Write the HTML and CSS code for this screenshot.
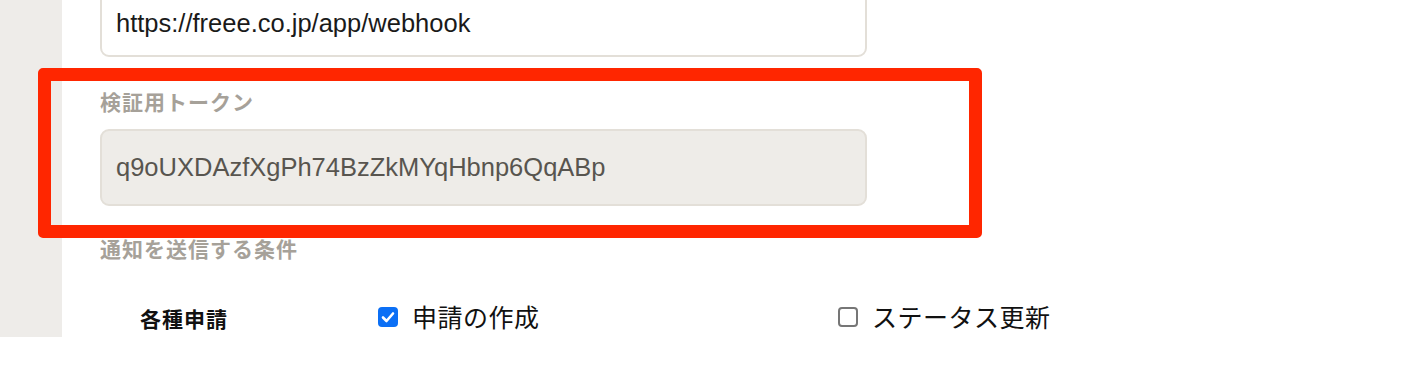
FILE: index.html
```html
<!DOCTYPE html>
<html lang="ja">
<head>
<meta charset="utf-8">
<link rel="stylesheet" href="styles.css">
</head>
<body>
<div class="page">
  <aside class="sidebar"></aside>
  <main class="main">
    <div class="field">https://freee.co.jp/app/webhook</div>
    <div class="label label-token">検証用トークン</div>
    <div class="field field-readonly">q9oUXDAzfXgPh74BzZkMYqHbnp6QqABp</div>
    <div class="label label-cond">通知を送信する条件</div>
    <div class="row">
      <div class="row-title">各種申請</div>
      <label class="check check-first">
        <span class="box box-checked">
          <svg viewBox="0 0 20 20" width="20" height="20"><path d="M5 10.5 L8.5 14 L15 6.5" fill="none" stroke="#fff" stroke-width="2.6" stroke-linecap="round" stroke-linejoin="round"/></svg>
        </span>
        <span class="check-text">申請の作成</span>
      </label>
      <label class="check">
        <span class="box"></span>
        <span class="check-text">ステータス更新</span>
      </label>
    </div>
  </main>
  <div class="highlight"></div>
</div>
</body>
</html>
```
FILE: styles.css
```css
html, body {
  margin: 0;
  padding: 0;
  background: #fff;
}
body {
  font-family: "Liberation Sans", "Noto Sans CJK JP", sans-serif;
}
.page {
  position: relative;
  display: flex;
  height: 337px;
  overflow: hidden;
}
.sidebar {
  width: 62px;
  flex: none;
  background: #eeece9;
}
.main {
  flex: 1;
  padding-left: 38px;
  margin-top: -20px;
}
.field {
  box-sizing: border-box;
  width: 767px;
  height: 77px;
  border: 2px solid #e3dfd8;
  border-radius: 9px;
  padding-left: 14px;
  display: flex;
  align-items: center;
  font-size: 25.5px;
  color: #1a1a1a;
  padding-top: 10px;
}
.field-readonly {
  background: #eeece8;
  color: #58554f;
  margin-top: 13px;
  padding-top: 0;
}
.label {
  font-family: "Noto Sans CJK JP", sans-serif;
  font-weight: 700;
  font-size: 21px;
  letter-spacing: 1px;
  line-height: 30px;
  color: #a6a199;
}
.label-token {
  margin-top: 29px;
}
.label-cond {
  margin-top: 27px;
}
.row {
  display: flex;
  align-items: center;
  margin-top: 39px;
  height: 30px;
  padding-left: 40px;
  font-family: "Noto Sans CJK JP", sans-serif;
}
.row-title {
  width: 238px;
  font-weight: 700;
  font-size: 21px;
  letter-spacing: 1px;
  color: #111;
  padding-top: 2px;
}
.check {
  display: flex;
  align-items: center;
  gap: 14px;
  font-size: 25px;
  letter-spacing: 0.5px;
  color: #111;
}
.check-first {
  width: 460px;
}
.box {
  box-sizing: border-box;
  width: 20px;
  height: 20px;
  border: 2px solid #767676;
  border-radius: 4px;
  display: block;
  background: #fff;
  flex: none;
}
.box-checked {
  border: none;
  background: #0b6ff5;
}
.box svg {
  display: block;
}
.check-text {
  line-height: 30px;
  margin-top: -3px;
}
.highlight {
  position: absolute;
  left: 38px;
  top: 68px;
  width: 944px;
  height: 170px;
  box-sizing: border-box;
  border: 13px solid #ff2600;
  border-radius: 5px;
}
```
